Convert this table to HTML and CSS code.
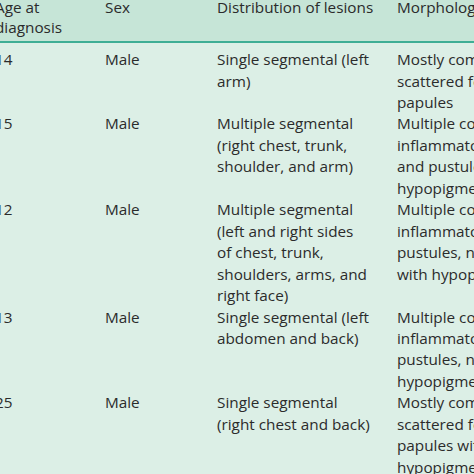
FILE: index.html
```html
<!DOCTYPE html>
<html>
<head>
<meta charset="utf-8">
<link rel="stylesheet" href="styles.css">
</head>
<body>
<div class="table">
  <div class="row head">
    <div class="cell">Age at<br>diagnosis</div>
    <div class="cell">Sex</div>
    <div class="cell">Distribution of lesions</div>
    <div class="cell">Morphology</div>
  </div>
  <div class="body">
    <div class="row">
      <div class="cell">14</div>
      <div class="cell">Male</div>
      <div class="cell">Single segmental (left<br>arm)</div>
      <div class="cell">Mostly comedones,<br>scattered few<br>papules</div>
    </div>
    <div class="row">
      <div class="cell">15</div>
      <div class="cell">Male</div>
      <div class="cell">Multiple segmental<br>(right chest, trunk,<br>shoulder, and arm)</div>
      <div class="cell">Multiple comedones,<br>inflammatory papules<br>and pustules,<br>hypopigmentation</div>
    </div>
    <div class="row">
      <div class="cell">12</div>
      <div class="cell">Male</div>
      <div class="cell">Multiple segmental<br>(left and right sides<br>of chest, trunk,<br>shoulders, arms, and<br>right face)</div>
      <div class="cell">Multiple comedones,<br>inflammatory papules,<br>pustules, nodules<br>with hypopigmentation</div>
    </div>
    <div class="row">
      <div class="cell">13</div>
      <div class="cell">Male</div>
      <div class="cell">Single segmental (left<br>abdomen and back)</div>
      <div class="cell">Multiple comedones,<br>inflammatory papules,<br>pustules, nodules,<br>hypopigmentation</div>
    </div>
    <div class="row">
      <div class="cell">25</div>
      <div class="cell">Male</div>
      <div class="cell">Single segmental<br>(right chest and back)</div>
      <div class="cell">Mostly comedones,<br>scattered few<br>papules with<br>hypopigmentation</div>
    </div>
  </div>
</div>
</body>
</html>
```
FILE: styles.css
```css
html, body {
  margin: 0;
  padding: 0;
  width: 474px;
  height: 474px;
  overflow: hidden;
  background: #dcefe6;
}
.table {
  margin-top: -3px;
  margin-left: -5px;
  font-family: "Open Sans", "Noto Sans", sans-serif;
  font-size: 15.3px;
  line-height: 21.45px;
  color: #2b2b2b;
  white-space: nowrap;
}
.row {
  display: grid;
  grid-template-columns: 110px 112px 180px 240px;
}
.head {
  background: #c6e5d7;
  line-height: 20.3px;
  padding-bottom: 3.5px;
  border-bottom: 2px solid #3fae95;
}
.body {
  background: #dcefe6;
  padding-top: 6px;
}
```
